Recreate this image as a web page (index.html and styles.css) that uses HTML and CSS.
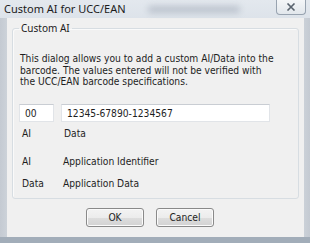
FILE: index.html
```html
<!DOCTYPE html>
<html>
<head>
<meta charset="utf-8">
<link rel="stylesheet" href="styles.css">
</head>
<body>
<div class="window">
  <div class="titlebar">
    <span class="title">Custom AI for UCC/EAN</span>
    <span class="ghost"></span>
    <span class="close">
      <svg width="10" height="8" viewBox="0 0 10 8"><path d="M1.5 0.5 L8.5 7.5 M8.5 0.5 L1.5 7.5" stroke="#59636e" stroke-width="1.6" fill="none"/></svg>
    </span>
  </div>
  <div class="client">
    <fieldset class="group">
      <legend>Custom AI</legend>
      <p class="intro">This dialog allows you to add a custom AI/Data into the<br>barcode. The values entered will not be verified with<br>the UCC/EAN barcode specifications.</p>
      <div class="grid inputs">
        <input class="box ai" type="text" value="00">
        <input class="box data" type="text" value="12345-67890-1234567">
        <span class="lbl">AI</span>
        <span class="lbl">Data</span>
      </div>
      <div class="grid legend-rows">
        <span class="lbl">AI</span>
        <span class="desc">Application Identifier</span>
        <span class="lbl">Data</span>
        <span class="desc">Application Data</span>
      </div>
    </fieldset>
    <div class="buttons">
      <button class="btn">OK</button>
      <button class="btn">Cancel</button>
    </div>
  </div>
  <div class="bottomband"></div>
</div>
</body>
</html>
```
FILE: styles.css
```css
html, body {
  margin: 0;
  padding: 0;
}
body {
  width: 310px;
  height: 243px;
  overflow: hidden;
  background: #c9cfd6;
}
.window {
  width: 310px;
  height: 243px;
  display: flex;
  flex-direction: column;
  background: linear-gradient(90deg, #c4cad2 0px, #ccd2d9 7px, #ccd2d9 303px, #c4cad2 310px);
}
.titlebar {
  height: 18px;
  flex: none;
  display: flex;
  align-items: flex-start;
  background: linear-gradient(180deg, #e3e8ee 0%, #dde3ea 100%);
}
.title {
  font-family: "Noto Sans", sans-serif;
  font-size: 11px;
  line-height: 17px;
  color: #1c1c1c;
  padding-left: 4px;
  white-space: nowrap;
}
.ghost {
  width: 92px;
  height: 7px;
  margin: 6px 0 0 22px;
  background: rgba(120, 132, 150, 0.35);
  filter: blur(3px);
  border-radius: 3px;
}
.close {
  margin-left: auto;
  margin-right: 4px;
  width: 30px;
  height: 15px;
  box-sizing: border-box;
  border: 1px solid #98a3b0;
  border-top: none;
  border-radius: 0 0 4px 4px;
  background: linear-gradient(180deg, #f4f6f8 0%, #e2e7ec 100%);
  display: flex;
  align-items: center;
  justify-content: center;
}
.close svg {
  display: block;
}
.client {
  flex: 1;
  margin: 0 6px 0 7px;
  background: #f0f0f0;
  display: flex;
  flex-direction: column;
  font-family: "DejaVu Sans Condensed", "DejaVu Sans", sans-serif;
  font-stretch: condensed;
  font-size: 10.2px;
  color: #1e1e1e;
}
.group {
  margin: 3px 0 0 5px;
  width: 287px;
  height: 178px;
  box-sizing: border-box;
  border: 1px solid #d7dde2;
  border-radius: 3px;
  padding: 0 0 0 6px;
  box-shadow: inset 1px 1px 0 #fafafa;
}
.group legend {
  font-family: "Noto Sans", sans-serif;
  font-stretch: normal;
  font-size: 10px;
  line-height: 14px;
  padding: 0 2px;
  margin-left: 0;
  color: #1c1c1c;
}
.intro {
  margin: 18px 0 0 1px;
  line-height: 11.7px;
  white-space: nowrap;
}
.grid {
  display: grid;
  grid-template-columns: 42px 209px;
}
.inputs {
  margin-top: 16px;
  row-gap: 6px;
}
.box {
  height: 18px;
  box-sizing: border-box;
  border: 1px solid #e1e4e8;
  border-top-color: #c9cdd3;
  background: #ffffff;
  font-family: "DejaVu Sans Condensed", "DejaVu Sans", sans-serif;
  font-stretch: condensed;
  font-size: 10.2px;
  color: #1e1e1e;
  padding: 0 0 0 5px;
  margin: 0;
  outline: none;
}
.ai {
  width: 35px;
}
.data {
  width: 209px;
}
.lbl {
  padding-left: 3px;
  line-height: 12px;
}
.legend-rows {
  margin-top: 16px;
  row-gap: 10px;
}
.desc {
  padding-left: 2px;
  line-height: 12px;
}
.buttons {
  display: flex;
  gap: 12px;
  padding-left: 79px;
  margin-top: 9px;
}
.btn {
  width: 58px;
  height: 19px;
  box-sizing: border-box;
  border: 1px solid #8a8a8a;
  border-radius: 3px;
  background: linear-gradient(180deg, #f3f3f3 0%, #ececec 50%, #dedede 50%, #d2d2d2 100%);
  box-shadow: inset 0 0 0 1px #fbfbfb;
  font-family: "DejaVu Sans Condensed", "DejaVu Sans", sans-serif;
  font-stretch: condensed;
  font-size: 10.2px;
  color: #1e1e1e;
  padding: 0;
}
.bottomband {
  height: 6px;
  flex: none;
  background: #a2adb9;
}
```
